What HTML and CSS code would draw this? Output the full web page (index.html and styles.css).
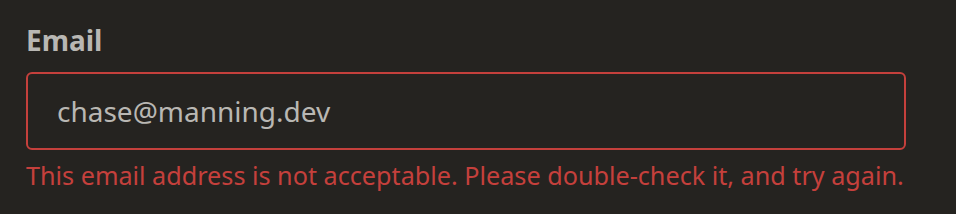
FILE: index.html
```html
<!DOCTYPE html>
<html>
<head>
  <link rel="stylesheet" href="styles.css">
</head>
<body>
  <div class="field">
    <label class="field-label" for="email">Email</label>
    <input class="field-input invalid" id="email" type="email" value="chase@manning.dev">
    <div class="field-error">This email address is not acceptable. Please double-check it, and try again.</div>
  </div>
</body>
</html>
```

FILE: styles.css
```css
:root {
  --bg: #252320;
  --text: #b9b7b3;
  --error: #c5403c;
}

body {
  margin: 0;
  padding: 21px 50px 0 26px;
  background-color: var(--bg);
  font-family: 'Noto Sans', sans-serif;
}

.field {
  display: flex;
  flex-direction: column;
}

.field-label {
  font-size: 28px;
  font-weight: 700;
  color: var(--text);
  line-height: 38px;
  margin-bottom: 13px;
}

.field-input {
  box-sizing: border-box;
  width: 880px;
  height: 78px;
  padding: 0 29px;
  border: 2px solid var(--error);
  border-radius: 6px;
  background: var(--bg);
  color: var(--text);
  font-family: 'Noto Sans', sans-serif;
  font-size: 28px;
  outline: none;
}

.field-error {
  margin-top: 8px;
  font-size: 25.2px;
  line-height: 34px;
  color: var(--error);
}
```
